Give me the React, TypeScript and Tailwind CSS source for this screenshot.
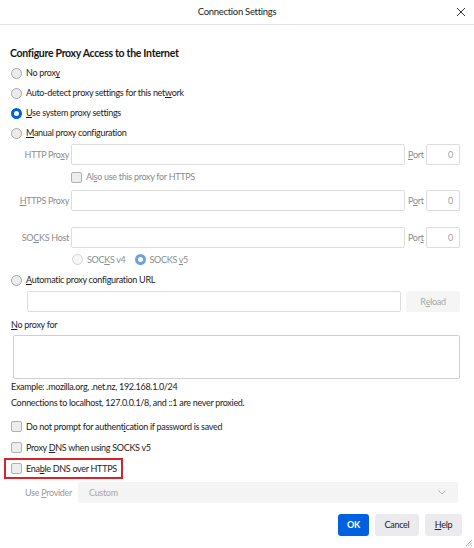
import React from "react";

const F = { fontFamily: 'Lato, "Noto Sans", sans-serif' };

function Radio({ checked = false, disabled = false }: { checked?: boolean; disabled?: boolean }) {
  if (checked) {
    return (
      <span
        className={
          "inline-block w-[11px] h-[11px] rounded-full bg-white shrink-0 border-[3px] " +
          (disabled ? "border-[#6f9fe3]" : "border-[#0061e0]")
        }
      />
    );
  }
  return (
    <span
      className={
        "inline-block w-[11px] h-[11px] rounded-full shrink-0 border " +
        (disabled ? "border-[#d4d4d4] bg-[#f6f6f6]" : "border-[#a8a8a8] bg-[#ececec]")
      }
    />
  );
}

function Check() {
  return <span className="inline-block w-[11px] h-[11px] rounded-[2px] border border-[#b0b0b0] bg-[#ededed] shrink-0" />;
}

function U({ children }: { children: React.ReactNode }) {
  return <span className="underline underline-offset-[1px]">{children}</span>;
}

function ProxyRow({ label, port }: { label: React.ReactNode; port: React.ReactNode }) {
  return (
    <div className="flex items-center h-[21px] whitespace-nowrap">
      <div className="w-[61px] text-right pr-[2px] text-[#8c8c8c]">{label}</div>
      <div className="w-[334px] h-[21px] border border-[#dcdcdc] rounded-[2px] bg-white" />
      <div className="w-[21px] pl-[3px] text-[#8c8c8c]">{port}</div>
      <div className="w-[34px] h-[21px] border border-[#dcdcdc] rounded-[2px] bg-white flex items-center justify-end pr-[6px] text-[#a0a0a0]">
        0
      </div>
    </div>
  );
}

export default function App() {
  return (
    <div
      className="w-[474px] h-[548px] bg-white text-[9px] tracking-[-0.3px] text-[#1c1c1c] relative overflow-hidden whitespace-nowrap"
      style={F}
    >
      <div className="h-[25px] border-b border-[#e3e3e3] flex items-center justify-center relative">
        <span className="text-[9.5px] text-[#222]">Connection Settings</span>
        <svg className="absolute right-[8px] top-[7px]" width="10" height="10" viewBox="0 0 10 10">
          <path d="M1 1 L9 9 M9 1 L1 9" stroke="#333" strokeWidth="1" />
        </svg>
      </div>

      <div className="pl-[10px] pr-[14px]">
        <div className="h-[18px] mt-[20px] flex items-center text-[10.5px] font-bold text-[#151515]">
          Configure Proxy Access to the Internet
        </div>
        <div className="flex items-center h-[20px] gap-[4px] pl-[1px]">
          <Radio />
          <span>
            No prox<U>y</U>
          </span>
        </div>
        <div className="flex items-center h-[20px] gap-[4px] pl-[1px]">
          <Radio />
          <span>
            Auto-detect proxy settings for this net<U>w</U>ork
          </span>
        </div>
        <div className="flex items-center h-[20px] gap-[4px] pl-[1px]">
          <Radio checked />
          <span>
            <U>U</U>se system proxy settings
          </span>
        </div>
        <div className="flex items-center h-[20px] gap-[4px] pl-[1px]">
          <Radio />
          <span>
            <U>M</U>anual proxy configuration
          </span>
        </div>

        <div className="mt-[1px]">
          <ProxyRow
            label={
              <>
                HTTP Pro<U>x</U>y
              </>
            }
            port={
              <>
                <U>P</U>ort
              </>
            }
          />
        </div>
        <div className="flex items-center h-[20px] mt-[2px] pl-[61px] gap-[4px] text-[#8c8c8c]">
          <Check />
          <span>
            Al<U>s</U>o use this proxy for HTTPS
          </span>
        </div>
        <div className="mt-[3px]">
          <ProxyRow
            label={
              <>
                <U>H</U>TTPS Proxy
              </>
            }
            port={
              <>
                P<U>o</U>rt
              </>
            }
          />
        </div>
        <div className="mt-[16px]">
          <ProxyRow
            label={
              <>
                SO<U>C</U>KS Host
              </>
            }
            port={
              <>
                Por<U>t</U>
              </>
            }
          />
        </div>
        <div className="flex items-center h-[21px] mt-[1px] pl-[62px] text-[#8c8c8c]">
          <Radio disabled />
          <span className="ml-[4px]">
            SOC<U>K</U>S v4
          </span>
          <span className="ml-[9px] flex">
            <Radio checked disabled />
          </span>
          <span className="ml-[4px]">
            SOCKS <U>v</U>5
          </span>
        </div>
        <div className="flex items-center h-[20px] gap-[4px] pl-[1px]">
          <Radio />
          <span>
            <U>A</U>utomatic proxy configuration URL
          </span>
        </div>
        <div className="flex items-center h-[21px] mt-[1px] pl-[17px]">
          <div className="w-[374px] h-[21px] border border-[#dcdcdc] rounded-[2px] bg-white" />
          <div className="ml-[5px] w-[54px] h-[21px] rounded-[3px] bg-[#f5f5f5] flex items-center justify-center text-[#a8a8a8]">
            R<U>e</U>load
          </div>
        </div>
        <div className="h-[20px] mt-[3px] flex items-center pl-[1px]">
          <span>
            <U>N</U>o proxy for
          </span>
        </div>
        <div className="ml-[3px] w-[447px] h-[44px] border border-[#cfcfcf] rounded-[2px] bg-white" />
        <div className="h-[16px] flex items-center pl-[1px] text-[#222]">Example: .mozilla.org, .net.nz, 192.168.1.0/24</div>
        <div className="h-[16px] flex items-center pl-[1px] text-[#222]">
          Connections to localhost, 127.0.0.1/8, and ::1 are never proxied.
        </div>
        <div className="flex items-center h-[21px] mt-[5px] gap-[4px] pl-[1px]">
          <Check />
          <span>
            Do not prompt for authent<U>i</U>cation if password is saved
          </span>
        </div>
        <div className="flex items-center h-[21px] gap-[4px] pl-[1px]">
          <Check />
          <span>
            Proxy <U>D</U>NS when using SOCKS v5
          </span>
        </div>
        <div className="h-[21px] -ml-[6px] w-[119px] border-2 border-[#d9232b] flex items-center gap-[4px] pl-[5px]">
          <Check />
          <span>
            Ena<U>b</U>le DNS over HTTPS
          </span>
        </div>
        <div className="flex items-center h-[21px] mt-[3px] pl-[15px]">
          <span className="w-[53px] text-[#9a9a9a]">
            Use <U>P</U>rovider
          </span>
          <div className="w-[380px] h-[21px] bg-[#f4f4f4] rounded-[2px] flex items-center justify-between pl-[11px] pr-[12px] text-[#a8a8a8]">
            <span>Custom</span>
            <svg width="8" height="5" viewBox="0 0 8 5">
              <path d="M0.5 0.5 L4 4 L7.5 0.5" fill="none" stroke="#b5b5b5" strokeWidth="1" />
            </svg>
          </div>
        </div>
        <div className="flex justify-end items-center h-[22px] mt-[11px] gap-[6px]">
          <div className="w-[31px] h-[22px] rounded-[3px] bg-[#0061e0] text-white font-bold flex items-center justify-center">
            OK
          </div>
          <div className="w-[44px] h-[22px] rounded-[3px] bg-[#ebebee] flex items-center justify-center text-[#222]">
            Cancel
          </div>
          <div className="w-[37px] h-[22px] rounded-[3px] bg-[#ebebee] flex items-center justify-center text-[#222] mr-[-2px]">
            <U>H</U>elp
          </div>
        </div>
      </div>
      <svg className="absolute right-[1px] bottom-[1px]" width="8" height="8" viewBox="0 0 8 8">
        <path d="M7 1 L1 7 M7 3.5 L3.5 7 M7 6 L6 7" stroke="#aaa" strokeWidth="0.8" />
      </svg>
    </div>
  );
}
